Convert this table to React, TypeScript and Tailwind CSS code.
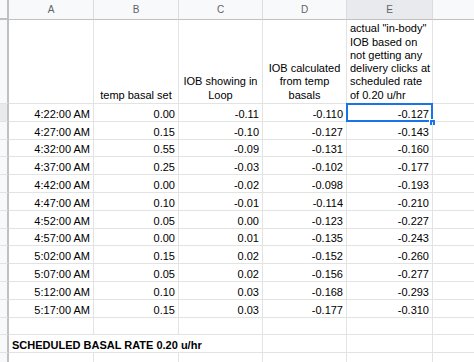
import React from 'react';

const times = [
  '4:22:00 AM', '4:27:00 AM', '4:32:00 AM', '4:37:00 AM', '4:42:00 AM', '4:47:00 AM',
  '4:52:00 AM', '4:57:00 AM', '5:02:00 AM', '5:07:00 AM', '5:12:00 AM', '5:17:00 AM',
];
const tempBasal = ['0.00', '0.15', '0.55', '0.25', '0.00', '0.10', '0.05', '0.00', '0.15', '0.05', '0.10', '0.15'];
const iobLoop = ['-0.11', '-0.10', '-0.09', '-0.03', '-0.02', '-0.01', '0.00', '0.01', '0.02', '0.02', '0.03', '0.03'];
const iobCalc = ['-0.110', '-0.127', '-0.131', '-0.102', '-0.098', '-0.114', '-0.123', '-0.135', '-0.152', '-0.156', '-0.168', '-0.177'];
const iobBody = ['-0.127', '-0.143', '-0.160', '-0.177', '-0.193', '-0.210', '-0.227', '-0.243', '-0.260', '-0.277', '-0.293', '-0.310'];

const widths = ['w-[85px]', 'w-[85px]', 'w-[84px]', 'w-[84px]', 'w-[86px]'];

const RowHead = ({ active }: { active?: boolean }) => (
  <div
    className={`w-[9px] shrink-0 border-r-2 border-b border-r-[#c0c0c0] border-b-[#e2e3e3] ${
      active ? 'bg-[#e8eaed]' : 'bg-[#f8f9fa]'
    }`}
  />
);

const Cell = ({ w, children }: { w: string; children?: React.ReactNode }) => (
  <div className={`${w} shrink-0 flex items-end justify-end px-[3px] pb-px leading-none border-r border-b border-[#e2e3e3]`}>
    {children}
  </div>
);

const App = () => {
  return (
    <div
      className="w-[474px] h-[362px] overflow-hidden bg-white text-[11px] text-black"
      style={{ fontFamily: '"Liberation Sans", Arial, sans-serif' }}
    >
      {/* column letters */}
      <div className="flex h-[20px]">
        <div className="w-[9px] shrink-0 bg-[#f8f9fa] border-r-2 border-b-2 border-[#c0c0c0]" />
        {['A', 'B', 'C', 'D', 'E'].map((l, i) => (
          <div
            key={l}
            className={`${widths[i]} shrink-0 flex items-center justify-center text-[10px] text-[#5f6368] border-r border-b border-r-[#dadce0] border-b-[#c0c0c0] ${
              l === 'E' ? 'bg-[#e8eaed]' : 'bg-[#f8f9fa]'
            }`}
          >
            {l}
          </div>
        ))}
        <div className="flex-1 bg-[#f8f9fa] border-b border-[#c0c0c0]" />
      </div>

      {/* header labels */}
      <div className="flex h-[84px]">
        <RowHead />
        <div className="w-[85px] shrink-0 border-r border-b border-[#e2e3e3]" />
        <div className="w-[85px] shrink-0 flex items-end justify-center pb-px leading-[13.3px] text-center border-r border-b border-[#e2e3e3]">
          temp basal set
        </div>
        <div className="w-[84px] shrink-0 flex items-end justify-center pb-px leading-[13.3px] text-center border-r border-b border-[#e2e3e3] whitespace-nowrap">
          <span>
            IOB showing in
            <br />
            Loop
          </span>
        </div>
        <div className="w-[84px] shrink-0 flex items-end justify-center pb-px leading-[13.3px] text-center border-r border-b border-[#e2e3e3] whitespace-nowrap">
          <span>
            IOB calculated
            <br />
            from temp
            <br />
            basals
          </span>
        </div>
        <div className="w-[86px] shrink-0 flex items-end justify-start pl-[3px] pb-px leading-[13.3px] border-r border-b border-[#e2e3e3] whitespace-nowrap">
          <span>
            actual "in-body"
            <br />
            IOB based on
            <br />
            not getting any
            <br />
            delivery clicks at
            <br />
            scheduled rate
            <br />
            of 0.20 u/hr
          </span>
        </div>
        <div className="flex-1 border-b border-[#e2e3e3]" />
      </div>

      {/* data rows */}
      {times.map((t, i) => (
        <div key={t} className="flex h-[17.8px]">
          <RowHead active={i === 0} />
          <Cell w="w-[85px]">{t}</Cell>
          <Cell w="w-[85px]">{tempBasal[i]}</Cell>
          <Cell w="w-[84px]">{iobLoop[i]}</Cell>
          <Cell w="w-[84px]">{iobCalc[i]}</Cell>
          <div className="relative w-[86px] shrink-0 flex items-end justify-end px-[3px] pb-px leading-none border-r border-b border-[#e2e3e3]">
            {iobBody[i]}
            {i === 0 && (
              <>
                <div className="absolute left-[-1px] top-[-1px] right-[-1px] bottom-[-1px] border-2 border-[#1a73e8]" />
                <div className="absolute right-[-3px] bottom-[-4px] w-[5px] h-[5px] bg-[#1a73e8] ring-1 ring-white" />
              </>
            )}
          </div>
          <div className="flex-1 border-b border-[#e2e3e3]" />
        </div>
      ))}

      {/* blank row */}
      <div className="flex h-[17.8px]">
        <RowHead />
        {widths.map((w, i) => (
          <Cell key={i} w={w} />
        ))}
        <div className="flex-1 border-b border-[#e2e3e3]" />
      </div>

      {/* scheduled rate row, text runs over B and C */}
      <div className="flex h-[17.8px]">
        <RowHead />
        <div className="w-[254px] shrink-0 flex items-end pl-[3px] pb-px leading-none font-bold whitespace-nowrap border-r border-b border-[#e2e3e3]">
          SCHEDULED BASAL RATE 0.20 u/hr
        </div>
        <Cell w="w-[84px]" />
        <Cell w="w-[86px]" />
        <div className="flex-1 border-b border-[#e2e3e3]" />
      </div>

      {/* partial row */}
      <div className="flex h-[17.8px]">
        <RowHead />
        {widths.map((w, i) => (
          <Cell key={i} w={w} />
        ))}
        <div className="flex-1 border-b border-[#e2e3e3]" />
      </div>
    </div>
  );
};

export default App;
